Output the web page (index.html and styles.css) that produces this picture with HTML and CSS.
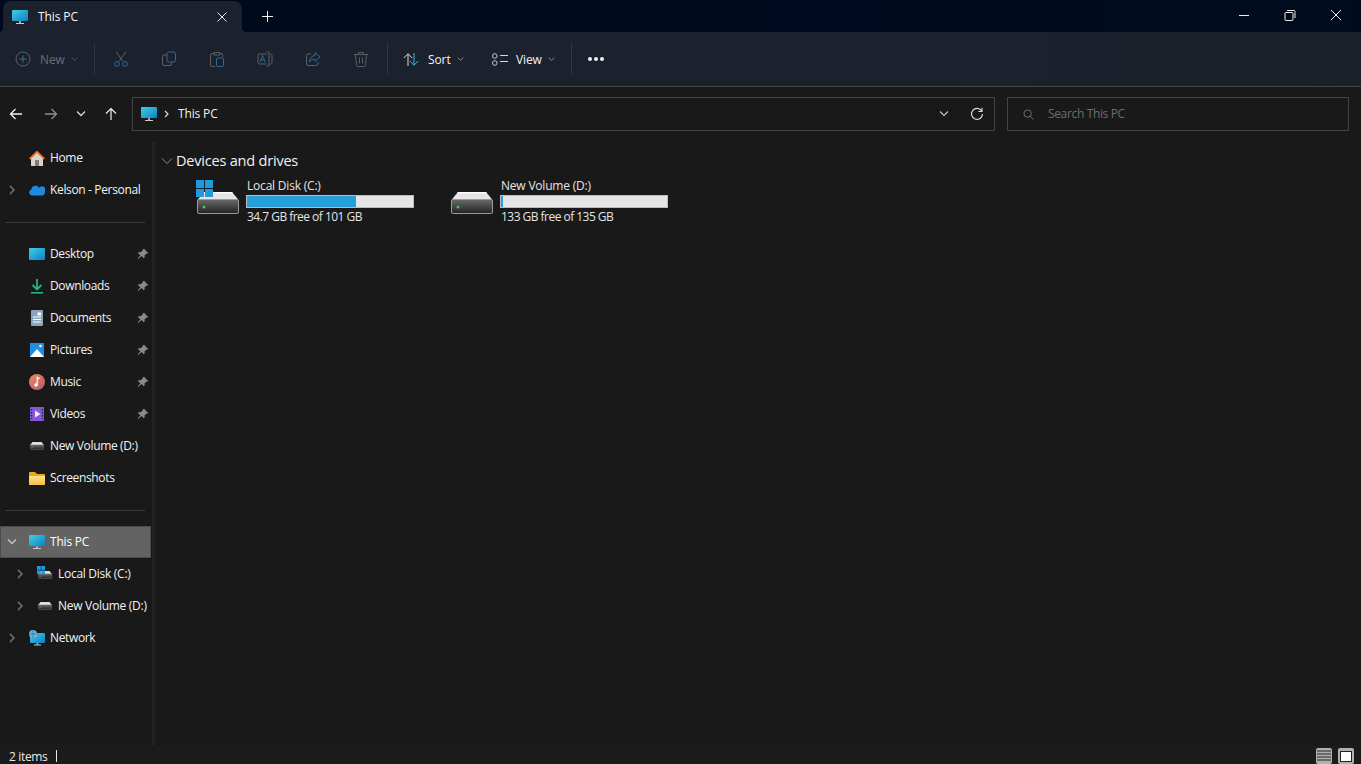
FILE: index.html
```html
<!DOCTYPE html>
<html lang="en">
<head>
<meta charset="utf-8">
<title>This PC</title>
<link rel="stylesheet" href="styles.css">
</head>
<body>
<svg class="defs" width="0" height="0" aria-hidden="true">
  <defs>
    <linearGradient id="gScreen" x1="0" y1="0" x2="1" y2="1"><stop offset="0" stop-color="#3fd0e6"/><stop offset="1" stop-color="#0f7fc4"/></linearGradient>
    <linearGradient id="gDrive" x1="0" y1="0" x2="0" y2="1"><stop offset="0" stop-color="#6a6a6a"/><stop offset="1" stop-color="#222"/></linearGradient>
    <linearGradient id="gFolder" x1="0" y1="0" x2="0" y2="1"><stop offset="0" stop-color="#ffe08a"/><stop offset="1" stop-color="#f5bd45"/></linearGradient>
    <linearGradient id="gMusic" x1="0" y1="0" x2="1" y2="1"><stop offset="0" stop-color="#ea8a64"/><stop offset="1" stop-color="#b8586a"/></linearGradient>
    <symbol id="pc" viewBox="0 0 16 16"><rect x="0" y="1" width="16" height="11" rx="1" fill="url(#gScreen)"/><rect x="7" y="12" width="2" height="2" fill="#9aa5ad"/><rect x="4" y="14" width="8" height="1" fill="#c3cbd0"/></symbol>
    <symbol id="chev-r" viewBox="0 0 8 10"><path d="M2 1l4 4-4 4" fill="none" stroke="#7c7c7c" stroke-width="1.4"/></symbol>
    <symbol id="chev-d" viewBox="0 0 10 8"><path d="M1 2l4 4 4-4" fill="none" stroke="currentColor" stroke-width="1.2"/></symbol>
    <symbol id="pin" viewBox="0 0 12 12"><path d="M7 .8l4.200 4.200-1 .7-.7-.2-2 2 .2 1.900-.9.9-2.300-2.300L1.200 11l-.4-.4 2.500-3.300L1 5l.9-.9 1.900.2 2-2-.2-.7z" fill="#8a8a8a"/></symbol>
    <symbol id="drive" viewBox="0 0 42 22"><path d="M7 0h28l7 8.500H0z" fill="#e6e6e6"/><path d="M7 0h28l1 1.200H6z" fill="#fff"/><rect x=".5" y="7.500" width="41" height="14" rx="1.500" fill="url(#gDrive)" stroke="#9a9a9a"/><circle cx="7" cy="15" r="1.500" fill="#35d04a"/></symbol>
    <symbol id="win" viewBox="0 0 17 17"><path d="M0 0h8v8H0zM9 0h8v8H9zM0 9h8v8H0zM9 9h8v8H9z" fill="#1e9ae0"/></symbol>
  </defs>
</svg>

<div class="app">
  <header class="titlebar">
    <div class="tab">
      <svg class="ic16"><use href="#pc"/></svg>
      <span class="tab-title">This PC</span>
      <svg class="tab-x" viewBox="0 0 10 10"><path d="M.5.5l9 9M9.500.5l-9 9" stroke="#e8e8e8" fill="none"/></svg>
    </div>
    <svg class="tab-plus" viewBox="0 0 11 11"><path d="M5.500 0v11M0 5.500h11" stroke="#eee" fill="none"/></svg>
    <div class="winctl">
      <svg class="wc" viewBox="0 0 46 14"><path d="M18 7.500h10" stroke="#eee" fill="none"/></svg>
      <svg class="wc" viewBox="0 0 46 14"><path d="M18.500 4.500h6.500a1 1 0 0 1 1 1v6a1 1 0 0 1-1 1h-6a1 1 0 0 1-1-1v-6.500z" stroke="#eee" fill="none"/><path d="M20 2.500h6a1.500 1.500 0 0 1 2 2v5.500" stroke="#eee" fill="none"/></svg>
      <svg class="wc" viewBox="0 0 46 14"><path d="M18 2l10 10M28 2L18 12" stroke="#eee" fill="none"/></svg>
    </div>
  </header>

  <section class="toolbar">
    <div class="tb-new">
      <svg class="ic16" viewBox="0 0 16 16"><circle cx="8" cy="8" r="7" fill="none" stroke="#5c5f64"/><path d="M8 4.500v7M4.500 8h7" stroke="#3c6c8c" fill="none"/></svg>
      <span class="tb-label dim">New</span>
      <svg class="chev dim"><use href="#chev-d"/></svg>
    </div>
    <i class="tb-sep"></i>
    <div class="tb-btn first"><svg class="ic-tb" viewBox="0 0 16 16"><path d="M3 .5l7 10M13 .5l-7 10" stroke="#5c5f64" fill="none"/><circle cx="4" cy="13" r="2.400" fill="none" stroke="#2f6a94"/><circle cx="12" cy="13" r="2.400" fill="none" stroke="#2f6a94"/></svg></div>
    <div class="tb-btn"><svg class="ic-tb" viewBox="0 0 16 16"><rect x="6" y="1" width="8.500" height="10" rx="1.500" fill="none" stroke="#2f6a94"/><path d="M6 4H3a1.500 1.500 0 0 0-1.500 1.500V13A1.500 1.500 0 0 0 3 14.500h6A1.500 1.500 0 0 0 10.500 13v-1" fill="none" stroke="#5c5f64"/></svg></div>
    <div class="tb-btn"><svg class="ic-tb" viewBox="0 0 16 16"><path d="M5 2.500H3A1.500 1.500 0 0 0 1.500 4v10A1.500 1.500 0 0 0 3 15.500h3M11 2.500h1A1.500 1.500 0 0 1 13.500 4v2M5 1.500h6v2.500H5z" fill="none" stroke="#5c5f64"/><rect x="7.500" y="7" width="7" height="8.500" rx="1" fill="none" stroke="#2f6a94"/></svg></div>
    <div class="tb-btn"><svg class="ic-tb" viewBox="0 0 16 16"><path d="M9.500 3H2.500A1.500 1.500 0 0 0 1 4.500v7A1.500 1.500 0 0 0 2.500 13h7M13 3a1.500 1.500 0 0 1 2 1.500v7A1.500 1.500 0 0 1 13 13M9.500 1h2.500v14H9.500" fill="none" stroke="#5c5f64"/><path d="M3 11l2.500-6.500L8 11M4 9h3" fill="none" stroke="#2f6a94"/></svg></div>
    <div class="tb-btn"><svg class="ic-tb" viewBox="0 0 16 16"><path d="M6 3H3A1.500 1.500 0 0 0 1.500 4.500V13A1.500 1.500 0 0 0 3 14.500h8.500A1.500 1.500 0 0 0 13 13v-2" fill="none" stroke="#5c5f64"/><path d="M10 1.500l5 4.500-5 4.500V8c-3 0-4.500 1-5.500 3 0-3.500 2-6 5.500-6.500z" fill="none" stroke="#2f6a94"/></svg></div>
    <div class="tb-btn"><svg class="ic-tb" viewBox="0 0 16 16"><path d="M1 3.500h14M5 3.500l.5-2h5l.5 2M2.500 3.500l1 11a1 1 0 0 0 1 1h7a1 1 0 0 0 1-1l1-11M6.500 6.500v6M9.500 6.500v6" fill="none" stroke="#5c5f64"/></svg></div>
    <i class="tb-sep"></i>
    <div class="tb-menu sort">
      <svg class="ic-menu" viewBox="0 0 16 13"><path d="M5 13V.8M.8 5L5 .8 9.200 5" fill="none" stroke="#d8d8d8"/><path d="M11 0v12.200M6.800 8L11 12.200 15.200 8" fill="none" stroke="#3fb2ec"/></svg>
      <span class="tb-label">Sort</span>
      <svg class="chev"><use href="#chev-d"/></svg>
    </div>
    <div class="tb-menu view">
      <svg class="ic-menu" viewBox="0 0 16 13"><circle cx="2.800" cy="3" r="2.300" fill="none" stroke="#c8c8c8"/><circle cx="2.800" cy="10" r="2.300" fill="none" stroke="#c8c8c8"/><path d="M8 2.500h8M8 8.500h8" stroke="#d8d8d8" fill="none"/></svg>
      <span class="tb-label">View</span>
      <svg class="chev"><use href="#chev-d"/></svg>
    </div>
    <i class="tb-sep"></i>
    <div class="more"><b></b><b></b><b></b></div>
  </section>

  <nav class="navbar">
    <div class="navbtns">
      <svg class="nb" viewBox="0 0 14 14"><path d="M13 7H1.500M6.500 2L1.500 7l5 5" fill="none" stroke="#f2f2f2" stroke-width="1.300"/></svg>
      <svg class="nb" viewBox="0 0 14 14"><path d="M1 7h11.500M7.500 2l5 5-5 5" fill="none" stroke="#8d8d8d" stroke-width="1.300"/></svg>
      <svg class="nb small" viewBox="0 0 10 8"><path d="M1 1.500l4 4 4-4" fill="none" stroke="#d8d8d8" stroke-width="1.300"/></svg>
      <svg class="nb" viewBox="0 0 14 14"><path d="M7 13V1.500M2 6.500l5-5 5 5" fill="none" stroke="#eee" stroke-width="1.200"/></svg>
    </div>
    <div class="address">
      <svg class="ic16"><use href="#pc"/></svg>
      <svg class="crumb" viewBox="0 0 6 8"><path d="M1 1l3 3-3 3" fill="none" stroke="#ddd" stroke-width="1.200"/></svg>
      <span class="addr-text">This PC</span>
      <svg class="addr-chev" viewBox="0 0 10 8"><path d="M1 1.500l4 4 4-4" fill="none" stroke="#c8c8c8" stroke-width="1.100"/></svg>
      <svg class="addr-refresh" viewBox="0 0 14 14"><path d="M11.800 4.200A5.500 5.500 0 1 0 12.500 7" fill="none" stroke="#d8d8d8" stroke-width="1.200"/><path d="M12 .8v3.700H8.300" fill="none" stroke="#d8d8d8" stroke-width="1.200"/></svg>
    </div>
    <div class="search">
      <svg class="search-ic" viewBox="0 0 12 12"><circle cx="5" cy="5" r="4" fill="none" stroke="#777"/><path d="M8 8l3.500 3.500" stroke="#777" fill="none"/></svg>
      <span>Search This PC</span>
    </div>
  </nav>

  <main class="main">
    <aside class="sidebar">
      <ul class="tree">
        <li class="row">
          <span class="twist"></span>
          <svg class="ic16" viewBox="0 0 16 16"><path d="M2 8v8h12V8L8 2z" fill="#d8d3cf"/><rect x="6" y="10" width="4" height="6" fill="#8b7a70"/><path d="M0 8.200L8 .5l8 7.700-1.200 1.200L8 3 1.200 9.400z" fill="#e8771f"/></svg>
          <span class="label">Home</span>
        </li>
        <li class="row">
          <span class="twist"><svg class="tw"><use href="#chev-r"/></svg></span>
          <svg class="ic16" viewBox="0 0 16 16"><path d="M3 13.500a3 3 0 0 1-.6-5.900A4.200 4.200 0 0 1 10.200 5.800a3.500 3.500 0 0 1 5.600 4.700 3 3 0 0 1-2.300 3z" fill="#1f8be0"/></svg>
          <span class="label">Kelson - Personal</span>
        </li>
      </ul>
      <hr class="rule">
      <ul class="tree">
        <li class="row"><span class="twist"></span>
          <svg class="ic16" viewBox="0 0 16 16"><rect y="2" width="16" height="12" rx="1" fill="url(#gScreen)"/></svg>
          <span class="label">Desktop</span><svg class="pin"><use href="#pin"/></svg></li>
        <li class="row"><span class="twist"></span>
          <svg class="ic16" viewBox="0 0 16 16"><path d="M8 1v10M3.500 7L8 11.500 12.500 7" fill="none" stroke="#21b38a" stroke-width="1.800"/><rect x="2" y="14" width="12" height="1.600" fill="#21b38a"/></svg>
          <span class="label">Downloads</span><svg class="pin"><use href="#pin"/></svg></li>
        <li class="row"><span class="twist"></span>
          <svg class="ic16" viewBox="0 0 16 16"><rect x="2" y="0" width="12" height="16" rx="1" fill="#8ea3bd"/><path d="M4 7h8M4 9.500h8M4 12h8" stroke="#fff"/><rect x="8.500" y="2.500" width="3.500" height="3" fill="#fff"/></svg>
          <span class="label">Documents</span><svg class="pin"><use href="#pin"/></svg></li>
        <li class="row"><span class="twist"></span>
          <svg class="ic16" viewBox="0 0 16 16"><rect x="1" y="1" width="14" height="14" fill="#1e8fe0"/><path d="M1 15l7-8 7 8z" fill="#fff"/><circle cx="11.500" cy="4" r="1.300" fill="#fff"/></svg>
          <span class="label">Pictures</span><svg class="pin"><use href="#pin"/></svg></li>
        <li class="row"><span class="twist"></span>
          <svg class="ic16" viewBox="0 0 16 16"><circle cx="8" cy="8" r="8" fill="url(#gMusic)"/><circle cx="7" cy="11" r="1.800" fill="#fff"/><path d="M8.200 11V3.500l2.500 1.200" fill="none" stroke="#fff" stroke-width="1.200"/></svg>
          <span class="label">Music</span><svg class="pin"><use href="#pin"/></svg></li>
        <li class="row"><span class="twist"></span>
          <svg class="ic16" viewBox="0 0 16 16"><rect x="1" y="1" width="14" height="14" rx="1" fill="#8558d8"/><path d="M6 4.500v7L11.500 8z" fill="#eee"/><path d="M2.500 3v10" stroke="#2c1a66" stroke-width="1.400" stroke-dasharray="1.500 1.500"/><path d="M13.500 3v10" stroke="#2c1a66" stroke-width="1.400" stroke-dasharray="1.500 1.500"/></svg>
          <span class="label">Videos</span><svg class="pin"><use href="#pin"/></svg></li>
        <li class="row"><span class="twist"></span>
          <svg class="drive-sm"><use href="#drive"/></svg>
          <span class="label">New Volume (D:)</span></li>
        <li class="row"><span class="twist"></span>
          <svg class="ic16" viewBox="0 0 16 16"><path d="M0 3a1 1 0 0 1 1-1h5l2 2h7a1 1 0 0 1 1 1v9a1 1 0 0 1-1 1H1a1 1 0 0 1-1-1z" fill="#e8a823"/><path d="M0 6h16v8a1 1 0 0 1-1 1H1a1 1 0 0 1-1-1z" fill="url(#gFolder)"/></svg>
          <span class="label">Screenshots</span></li>
      </ul>
      <hr class="rule">
      <ul class="tree">
        <li class="row selected">
          <span class="twist"><svg class="tw-d" viewBox="0 0 10 8"><path d="M1 1.500l4 4 4-4" fill="none" stroke="#c4c4c4" stroke-width="1.500"/></svg></span>
          <svg class="ic16"><use href="#pc"/></svg>
          <span class="label">This PC</span>
        </li>
        <li class="row child">
          <span class="twist"><svg class="tw"><use href="#chev-r"/></svg></span>
          <span class="ic-stack">
            <svg class="drive-sm"><use href="#drive"/></svg>
            <svg class="win-sm"><use href="#win"/></svg>
          </span>
          <span class="label">Local Disk (C:)</span>
        </li>
        <li class="row child">
          <span class="twist"><svg class="tw"><use href="#chev-r"/></svg></span>
          <svg class="drive-sm"><use href="#drive"/></svg>
          <span class="label">New Volume (D:)</span>
        </li>
        <li class="row">
          <span class="twist"><svg class="tw"><use href="#chev-r"/></svg></span>
          <svg class="ic16" viewBox="0 0 16 16"><rect x="1" y="3" width="15" height="10" rx="1" fill="url(#gScreen)"/><rect x="7.500" y="13" width="2" height="1.500" fill="#9aa5ad"/><rect x="5" y="14.500" width="7" height="1" fill="#c3cbd0"/><circle cx="4" cy="4" r="4" fill="#6fb4d8"/><path d="M0 4h8M4 0v8" stroke="#2c6f96" stroke-width=".7"/></svg>
          <span class="label">Network</span>
        </li>
      </ul>
    </aside>
    <div class="scroll"></div>
    <div class="content">
      <h2 class="group">
        <svg class="group-chev" viewBox="0 0 12 8"><path d="M1 1.500l5 5 5-5" fill="none" stroke="#8c8c8c"/></svg>
        Devices and drives
      </h2>
      <div class="drives">
        <div class="drive">
          <span class="drive-ic">
            <svg class="drive-lg"><use href="#drive"/></svg>
            <svg class="win-lg"><use href="#win"/></svg>
          </span>
          <div class="drive-info">
            <div class="drive-name">Local Disk (C:)</div>
            <div class="bar"><div class="bar-fill" style="width:65.5%"></div></div>
            <div class="drive-free">34.7 GB free of 101 GB</div>
          </div>
        </div>
        <div class="drive">
          <span class="drive-ic">
            <svg class="drive-lg"><use href="#drive"/></svg>
          </span>
          <div class="drive-info">
            <div class="drive-name">New Volume (D:)</div>
            <div class="bar"><div class="bar-fill" style="width:1.5%"></div></div>
            <div class="drive-free">133 GB free of 135 GB</div>
          </div>
        </div>
      </div>
    </div>
  </main>

  <footer class="status">
    <span class="count">2 items</span>
    <i class="caret"></i>
    <div class="views">
      <span class="vbtn"><svg viewBox="0 0 14 12" width="14" height="12"><path d="M0 1h14M0 4h14M0 7h14M0 10h14" stroke="#222" stroke-width="1.200"/></svg></span>
      <span class="vbtn"><i class="vbox"></i></span>
    </div>
  </footer>
</div>
</body>
</html>
```

FILE: styles.css
```css
* { box-sizing: border-box; }
html, body { margin: 0; padding: 0; }
body {
  width: 1361px;
  height: 764px;
  overflow: hidden;
  background: #191919;
  color: #f2f2f2;
  font: 12px/16px "Open Sans", "Noto Sans", sans-serif;
  letter-spacing: -0.35px;
}
.defs { position: absolute; }
ul { list-style: none; margin: 0; padding: 0; }
svg { display: block; flex: none; }
.app { display: flex; flex-direction: column; height: 764px; }

/* title bar */
.titlebar {
  height: 32px;
  flex: none;
  display: flex;
  align-items: center;
  background: linear-gradient(90deg, #000a1c, #000a20 60%, #000c1e);
  padding-left: 3px;
}
.tab {
  position: relative;
  width: 239px;
  height: 31px;
  margin-top: 1px;
  align-self: flex-start;
  display: flex;
  align-items: center;
  padding: 0 15px 0 9px;
  background: #1b222d;
  border-radius: 8px 8px 0 0;
}
.tab::before, .tab::after {
  content: "";
  position: absolute;
  bottom: 0;
  width: 4px;
  height: 4px;
}
.tab::before { left: -4px; background: radial-gradient(circle at 0 0, transparent 4px, #1b222d 4px); }
.tab::after { right: -4px; background: radial-gradient(circle at 100% 0, transparent 4px, #1b222d 4px); }
.ic16 { width: 16px; height: 16px; }
.tab-title { margin-left: 10px; flex: 1; color: #f5f5f5; letter-spacing: -0.1px; }
.tab-x { width: 10px; height: 10px; }
.tab-plus { width: 11px; height: 11px; margin-left: 20px; }
.winctl { margin-left: auto; display: flex; gap: 0; padding-right: 2px; }
.wc { width: 46px; height: 14px; margin-bottom: 2px; }

/* toolbar */
.toolbar {
  height: 55px;
  flex: none;
  display: flex;
  align-items: center;
  padding-left: 15px;
  background: linear-gradient(90deg, #1b222e, #1b222e 70%, #1c2029);
  border-bottom: 1px solid #434343;
}
.tb-new { display: flex; align-items: center; width: 79px; }
.tb-label { margin-left: 9px; margin-top: 1px; color: #f2f2f2; letter-spacing: -0.1px; }
.tb-new .tb-label { color: #6a6e74; }
.chev { width: 7px; height: 6px; margin-left: 6px; color: #a0a0a0; }
.chev.dim { color: #5c5f64; }
.tb-sep { width: 1px; height: 32px; background: #30363f; flex: none; }
.tb-btn { width: 48px; display: flex; justify-content: center; }
.tb-btn.first { margin-left: 2px; }
.ic-tb { width: 16px; height: 16px; }
.ic-menu { width: 16px; height: 13px; }
.tb-btn + .tb-sep { margin-left: 2px; }
.tb-menu { display: flex; align-items: center; }
.sort { margin-left: 15px; width: 89px; }
.view { width: 79px; }
.view .tb-label { margin-left: 8px; }
.more { display: flex; gap: 2px; margin-left: 16px; }
.more b { width: 4px; height: 4px; border-radius: 50%; background: #f2f2f2; }

/* nav */
.navbar {
  height: 55px;
  flex: none;
  display: flex;
  align-items: center;
  padding-bottom: 1px;
  gap: 12px;
}
.navbtns { width: 132px; display: flex; align-items: center; padding-left: 9px; margin-right: -12px; }
.nb { width: 14px; height: 14px; margin-right: 21px; }
.nb.small { width: 10px; height: 8px; margin-right: 18px; margin-left: -3px; }
.navbtns .nb:last-child { margin-right: 0; }
.address, .search {
  height: 34px;
  border: 1px solid #444;
  display: flex;
  align-items: center;
  background: #191919;
}
.address { width: 863px; padding: 0 10px 0 8px; }
.crumb { width: 6px; height: 8px; margin-left: 7px; }
.addr-text { margin-left: 8px; flex: 1; letter-spacing: -0.15px; }
.addr-chev { width: 10px; height: 8px; margin-right: 21px; }
.addr-refresh { width: 14px; height: 14px; }
.search { width: 342px; padding-left: 15px; color: #6d6d6d; }
.search-ic { width: 11px; height: 11px; margin-right: 14px; }

/* main */
.main { flex: 1; display: flex; min-height: 0; }
.sidebar { width: 151px; flex: none; }
.scroll { width: 3px; margin-left: 1px; background: #232323; flex: none; }
.row { height: 32px; display: flex; align-items: center; white-space: nowrap; position: relative; }
.twist { width: 29px; flex: none; display: flex; padding-left: 8px; }
.tw { width: 8px; height: 10px; }
.tw-d { width: 10px; height: 8px; margin-left: -1px; }
.label { margin-left: 5px; }
.pin { width: 12px; height: 12px; margin-left: auto; margin-right: 2px; }
.rule { height: 1px; border: 0; background: #3a3a3a; margin: 16px 6px 15px 5px; }
.selected { background: #636363; box-shadow: inset 0 0 0 1px #4a4a4a; color: #fff; }
.selected .label { letter-spacing: -0.2px; }
.child .twist { width: 37px; padding-left: 16px; }
.child .label { letter-spacing: -0.28px; }
.drive-sm { width: 14px; height: 8px; margin: 0 1px; }
.ic-stack { position: relative; width: 16px; height: 16px; display: flex; align-items: flex-end; }
.ic-stack .drive-sm { margin-bottom: 3px; }
.win-sm { position: absolute; left: 0; top: 0; width: 8px; height: 8px; }

/* content */
.content { flex: 1; padding: 9px 0 0 6px; }
.group {
  margin: 0;
  height: 20px;
  display: flex;
  align-items: center;
  font-size: 14.5px;
  font-weight: 400;
  color: #f2f2f2;
  letter-spacing: -0.2px;
}
.group-chev { width: 12px; height: 8px; margin-right: 3px; }
.drives { display: flex; padding-left: 35px; margin-top: 7px; }
.drive { width: 254px; display: flex; align-items: flex-start; }
.drive-ic { position: relative; width: 44px; height: 46px; padding: 14px 0 0 1px; display: block; }
.drive-lg { width: 42px; height: 22px; }
.win-lg { position: absolute; left: 0; top: 2px; width: 17px; height: 17px; }
.drive-info { margin-left: 6px; width: 168px; }
.drive-name, .drive-free { padding-left: 1px; height: 15px; line-height: 15px; color: #e4e4e4; }
.drive-name { letter-spacing: -0.2px; }
.drive-free { letter-spacing: -0.53px; }
.bar { height: 13px; margin: 2px 0 1px; background: #e6e6e6; border: 1px solid #bcbcbc; }
.bar-fill { height: 100%; background: #26a0da; }

/* status */
.status { height: 19px; flex: none; display: flex; align-items: center; padding-left: 9px; background: #1b1b1b; font-size: 12px; }
.count { color: #e8e8e8; margin-top: 4px; }
.caret { width: 1px; height: 12px; background: #e8e8e8; margin-left: 9px; margin-top: 3px; }
.views { margin-left: auto; display: flex; gap: 6px; padding-right: 7px; margin-top: 3px; }
.vbtn { width: 16px; height: 16px; background: #b0b0b0; border-radius: 2px; display: flex; align-items: center; justify-content: center; }
.vbox { width: 12px; height: 11px; background: #fff; border: 1px solid #222; display: block; }
```
